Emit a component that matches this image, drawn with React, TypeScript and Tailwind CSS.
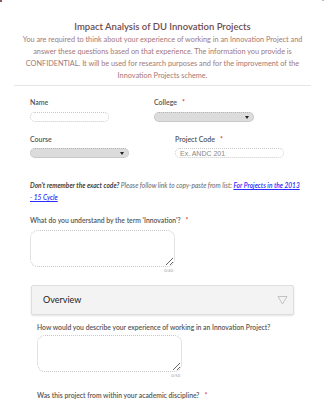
import React from 'react';

function Label({ text, required, size = 'text-[7px]' }: { text: string; required?: boolean; size?: string }) {
  return (
    <div className={`${size} leading-[10px] font-semibold text-[#555]`}>
      {text}
      {required && <span className="ml-[5px] text-[#e03030]">*</span>}
    </div>
  );
}

function SelectBox({ width }: { width: string }) {
  return (
    <div
      className={`${width} h-[10px] rounded-full border border-dotted border-[#b5b5b5] bg-[#dcdcdc] flex items-center justify-end pr-[4px]`}
    >
      <div className="w-0 h-0 border-l-[2px] border-r-[2px] border-t-[3px] border-l-transparent border-r-transparent border-t-[#222]" />
    </div>
  );
}

function TextBox({ width, placeholder }: { width: string; placeholder?: string }) {
  return (
    <input
      placeholder={placeholder}
      className={`${width} block h-[10px] rounded-full border border-dotted border-[#c8c8c8] bg-white px-[4px] text-[7px] leading-[8px] text-[#444] placeholder:text-[#888] outline-none`}
      style={{ fontFamily: 'Arial, "Liberation Sans", sans-serif' }}
    />
  );
}

function LongAnswer({ counter }: { counter: string }) {
  return (
    <div className="w-[145px]">
      <textarea className="block w-[145px] h-[37px] rounded-[8px] border border-dotted border-[#c8c8c8] bg-white outline-none resize-y" />
      <div className="text-right pr-[2px] text-[4px] leading-[8px] text-[#999]">{counter}</div>
    </div>
  );
}

export default function App() {
  return (
    <div
      className="w-[325px] h-[400px] overflow-hidden bg-white relative"
      style={{ fontFamily: 'Lato, "Open Sans", sans-serif' }}
    >
      <div className="absolute left-0 top-0 w-[2px] h-[2px] bg-[#8a5a5a]" />
      <div className="absolute right-[1px] top-0 w-[2px] h-[1px] bg-[#bbb]" />

      <div className="pt-[21px] px-[14px]">
        <h1 className="text-center text-[9.5px] leading-[12px] font-semibold text-[#6f4b4b]">
          Impact Analysis of DU Innovation Projects
        </h1>
        <p className="mt-[1px] text-center text-[7.3px] leading-[12px] text-[#a27878] px-[4px]">
          You are required to think about your experience of working in an Innovation Project and
          answer these questions based on that experience. The information you provide is
          CONFIDENTIAL. It will be used for research purposes and for the improvement of the
          Innovation Projects scheme.
        </p>
        <div className="mt-[3px] border-t border-[#e6e6e6]" />
      </div>

      <div className="pl-[30px] pr-[14px]">
        <div className="mt-[11px] flex">
          <div className="w-[124px]">
            <Label text="Name" />
            <div className="mt-[5px]">
              <TextBox width="w-[79px]" />
            </div>
          </div>
          <div>
            <Label text="College" required />
            <div className="mt-[5px]">
              <SelectBox width="w-[100px]" />
            </div>
          </div>
        </div>

        <div className="mt-[12px] flex">
          <div className="w-[145px]">
            <Label text="Course" />
            <div className="mt-[4px]">
              <SelectBox width="w-[99px]" />
            </div>
          </div>
          <div>
            <Label text="Project Code" required />
            <div className="mt-[4px]">
              <TextBox width="w-[109px]" placeholder="Ex. ANDC 201" />
            </div>
          </div>
        </div>

        <p className="mt-[21px] w-[275px] text-[6.6px] leading-[12px] italic text-[#666]">
          <span className="font-bold text-[#444]">Don't remember the exact code?</span> Please follow
          link to copy-paste from list:{' '}
          <a className="font-semibold text-[#2b2bff] underline" href="#">
            For Projects in the 2013
            <br />- 15 Cycle
          </a>
        </p>

        <div className="mt-[12px]">
          <Label text="What do you understand by the term 'Innovation'?" required size="text-[6.8px]" />
          <div className="mt-[5px]">
            <LongAnswer counter="0/40" />
          </div>
        </div>
      </div>

      <div className="ml-[31px] mr-[31px] mt-[10px] h-[30px] rounded-[2px] border border-[#dedede] bg-[#f3f3f3] shadow-[0_1px_2px_rgba(0,0,0,0.12)] flex items-center justify-between pl-[11px] pr-[5px]">
        <span className="text-[9px] text-[#222]">Overview</span>
        <svg width="11" height="10" viewBox="0 0 11 10">
          <path d="M1 1.5 L10 1.5 L5.5 9 Z" fill="none" stroke="#bdbdbd" strokeWidth="0.9" strokeLinejoin="round" />
        </svg>
      </div>

      <div className="pl-[37px]">
        <div className="mt-[7px]">
          <Label text="How would you describe your experience of working in an Innovation Project?" size="text-[6.8px]" />
          <div className="mt-[3px]">
            <LongAnswer counter="0/50" />
          </div>
        </div>
        <div className="mt-[10px]">
          <Label text="Was this project from within your academic discipline?" required size="text-[6.8px]" />
        </div>
      </div>
    </div>
  );
}
